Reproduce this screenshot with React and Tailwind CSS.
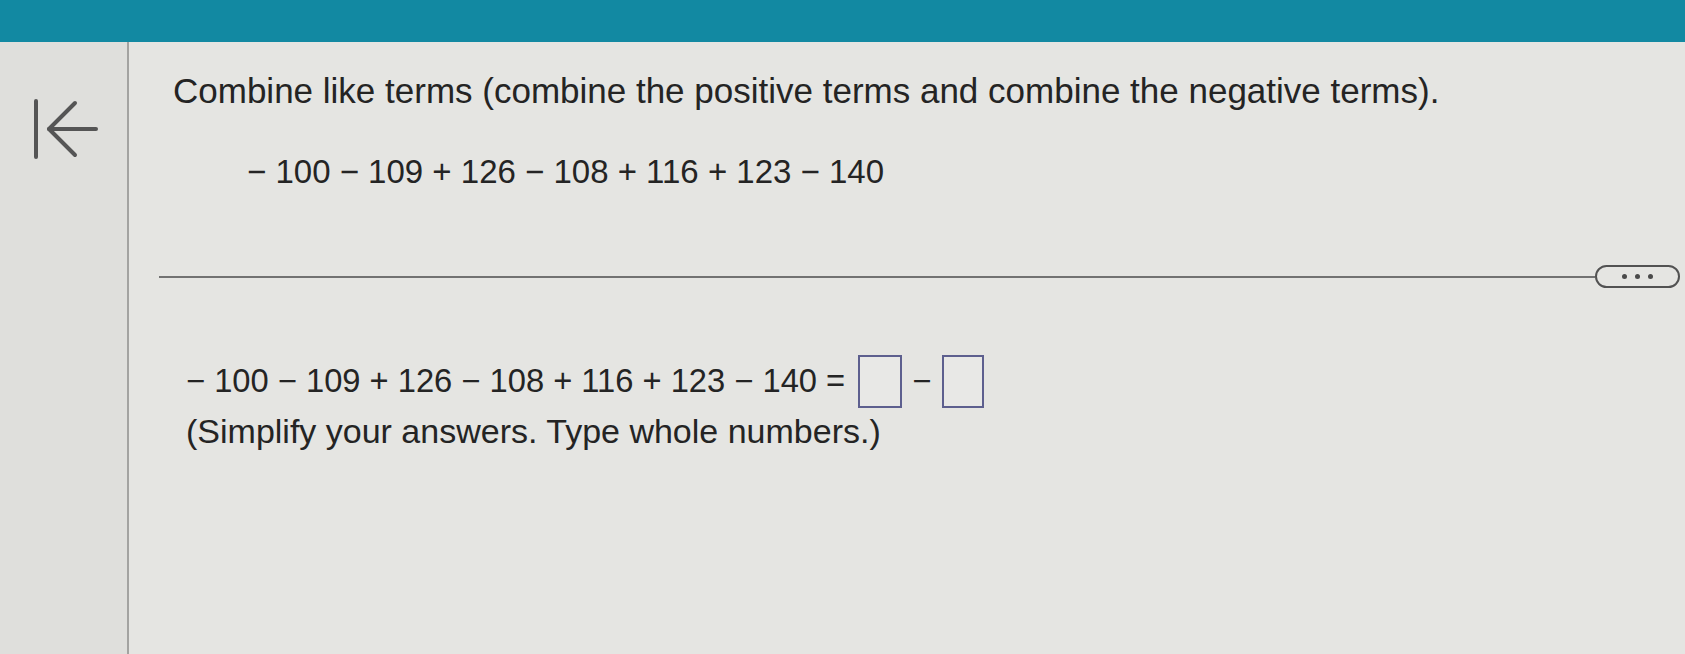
import React from "react";

export default function App() {
  return (
    <div className="w-[1685px] h-[654px] overflow-hidden flex flex-col bg-[#e5e5e2] text-[#242424] font-['Liberation_Sans',Arial,sans-serif]">
      <div className="h-[42px] shrink-0 bg-[#1289a2]" />
      <div className="flex flex-1">
        <aside className="w-[129px] shrink-0 border-r-2 border-[#a3a3a1] bg-[#dfdfdc] pt-[56px] pl-[30px]">
          <svg width="72" height="64" viewBox="0 0 72 64" fill="none" stroke="#555555" strokeWidth="4" strokeLinecap="round" strokeLinejoin="round">
            <line x1="6" y1="3" x2="6" y2="59" />
            <line x1="19" y1="31" x2="66" y2="31" />
            <polyline points="45,5 19,31 45,57" />
          </svg>
        </aside>
        <main className="flex-1 flex flex-col">
          <div className="ml-[44px] mt-[31px] text-[35px] leading-none whitespace-nowrap">
            Combine like terms (combine the positive terms and combine the negative terms).
          </div>
          <div className="ml-[118px] mt-[47px] text-[33px] leading-none whitespace-nowrap">
            − 100 − 109 + 126 − 108 + 116 + 123 − 140
          </div>
          <div className="ml-[30px] mr-[5px] mt-[77px] h-[23px] flex items-center">
            <div className="flex-1 h-[2px] bg-[#727272]" />
            <div className="w-[85px] h-[23px] shrink-0 rounded-full border-[2.5px] border-[#525252] flex items-center justify-center gap-[8px]">
              <span className="w-[5px] h-[5px] rounded-full bg-[#4a4a4a]" />
              <span className="w-[5px] h-[5px] rounded-full bg-[#4a4a4a]" />
              <span className="w-[5px] h-[5px] rounded-full bg-[#4a4a4a]" />
            </div>
          </div>
          <div className="ml-[57px] mt-[67px] h-[53px] flex items-center text-[32.7px] leading-none whitespace-nowrap">
            <span>− 100 − 109 + 126 − 108 + 116 + 123 − 140 =</span>
            <span className="ml-[13px] w-[44px] h-[53px] border-2 border-[#5d5f8e] bg-[#e8e8e6]" />
            <span className="ml-[10px]">−</span>
            <span className="ml-[11px] w-[42px] h-[53px] border-2 border-[#5d5f8e] bg-[#e8e8e6]" />
          </div>
          <div className="ml-[57px] mt-[6px] text-[34px] leading-none whitespace-nowrap">
            (Simplify your answers. Type whole numbers.)
          </div>
        </main>
      </div>
    </div>
  );
}
